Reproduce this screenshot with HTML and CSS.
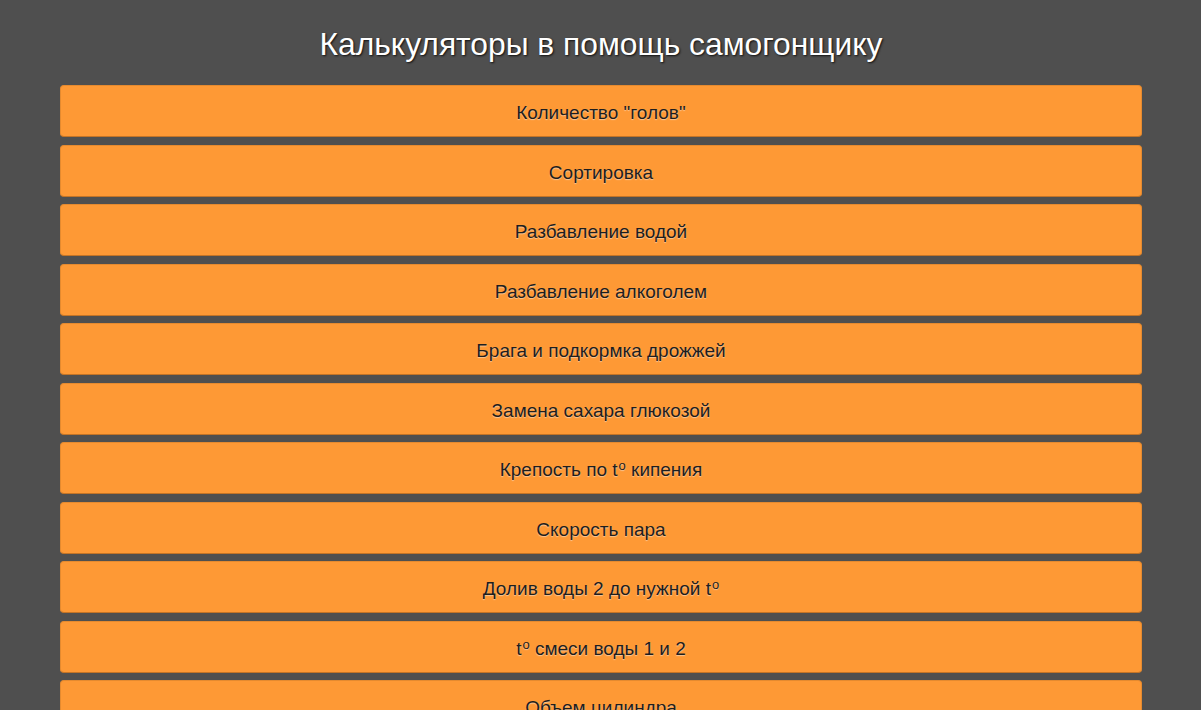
FILE: index.html
```html
<!DOCTYPE html>
<html lang="ru">
<head>
<meta charset="utf-8">
<title>Калькуляторы в помощь самогонщику</title>
<link rel="stylesheet" href="styles.css">
</head>
<body>
<div class="page">
  <h1 class="title">Калькуляторы в помощь самогонщику</h1>
  <nav class="list">
    <a class="btn" href="#"><span class="label">Количество "голов"</span></a>
    <a class="btn" href="#"><span class="label">Сортировка</span></a>
    <a class="btn" href="#"><span class="label">Разбавление водой</span></a>
    <a class="btn" href="#"><span class="label">Разбавление алкоголем</span></a>
    <a class="btn" href="#"><span class="label">Брага и подкормка дрожжей</span></a>
    <a class="btn" href="#"><span class="label">Замена сахара глюкозой</span></a>
    <a class="btn" href="#"><span class="label">Крепость по t<sup>o</sup> кипения</span></a>
    <a class="btn" href="#"><span class="label">Скорость пара</span></a>
    <a class="btn" href="#"><span class="label">Долив воды 2 до нужной t<sup>o</sup></span></a>
    <a class="btn" href="#"><span class="label">t<sup>o</sup> смеси воды 1 и 2</span></a>
    <a class="btn" href="#"><span class="label">Объем цилиндра</span></a>
  </nav>
</div>
</body>
</html>
```
FILE: styles.css
```css
html, body {
  margin: 0;
  padding: 0;
  background: #4f4f4f;
  overflow: hidden;
}
.page {
  padding: 0 59px 0 60px;
  font-family: "Liberation Sans", Arial, sans-serif;
}
.title {
  margin: 0;
  height: 85px;
  box-sizing: border-box;
  padding-top: 26px;
  font-size: 31.8px;
  font-weight: normal;
  line-height: 36px;
  text-align: center;
  color: #ffffff;
  text-shadow: 1px 1px 2px #111;
}
.list {
  display: flex;
  flex-direction: column;
  gap: 7.5px;
}
.btn {
  display: flex;
  align-items: center;
  justify-content: center;
  height: 52px;
  box-sizing: border-box;
  padding-top: 4px;
  background: #fe9935;
  border: 1px solid #e58a2f;
  border-bottom-color: #c47426;
  border-radius: 4px;
  color: #1e1e1e;
  text-decoration: none;
  font-size: 19px;
  text-shadow: 0 1px 1px #f7c79a;
}
.label {
  white-space: nowrap;
}
.btn sup {
  font-size: 13px;
  vertical-align: 0;
  position: relative;
  top: -6px;
  margin-left: 1px;
}
```
